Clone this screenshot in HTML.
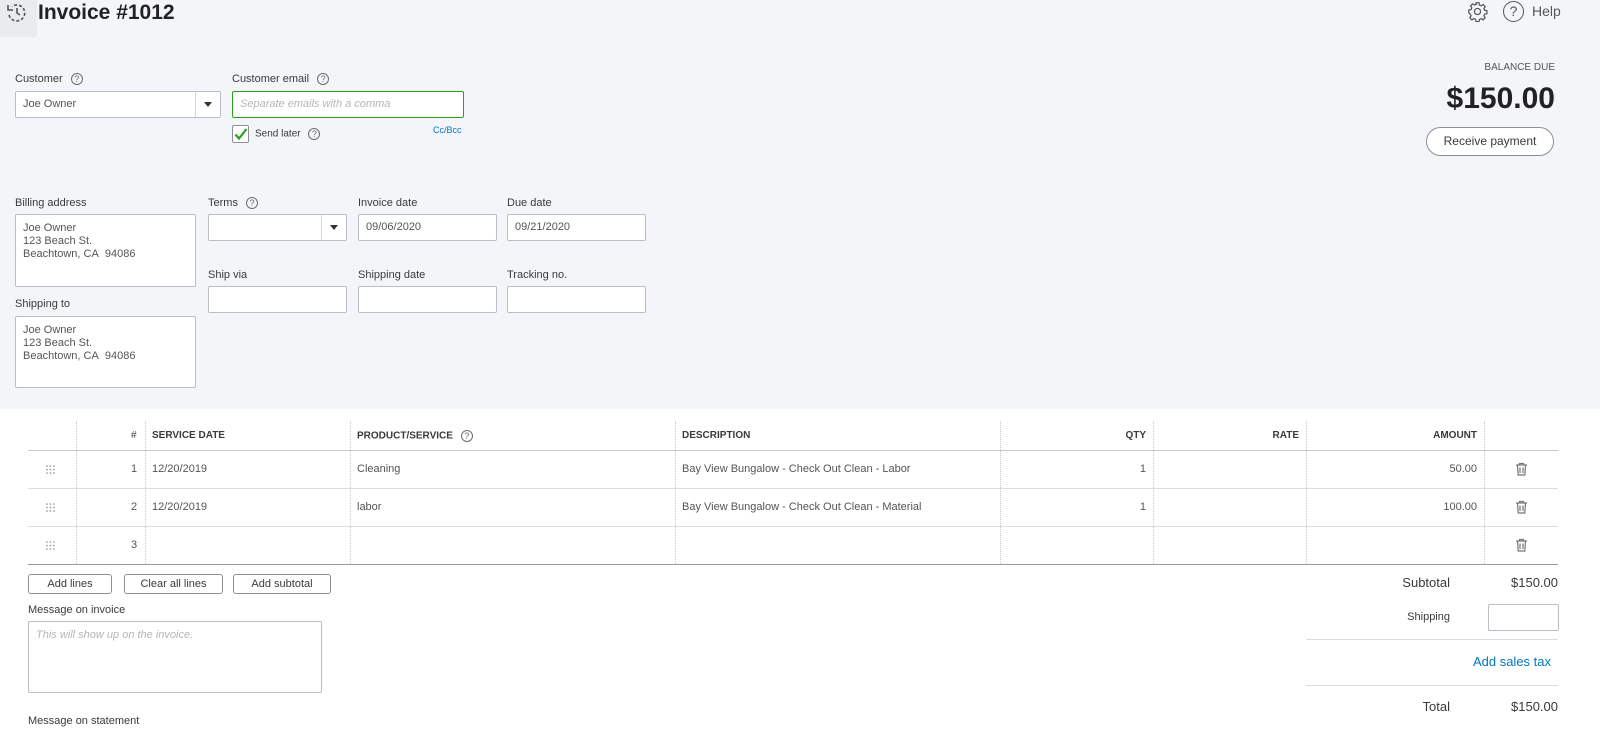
<!DOCTYPE html>
<html><head><meta charset="utf-8"><style>
*{box-sizing:border-box;margin:0;padding:0}
body{width:1600px;height:746px;overflow:hidden;background:#fff;font-family:"Liberation Sans",sans-serif;color:#393a3d;position:relative;font-size:11px}
.a{position:absolute}
.top{position:absolute;left:0;top:0;width:1600px;height:409px;background:#f4f5f8}
.lbl{position:absolute;font-size:11px;color:#393a3d}
.inp{position:absolute;background:#fff;border:1px solid #babec5;border-radius:2px;font-size:11px;color:#555;padding:0 7px;line-height:25px}
.q{display:inline-block;width:12px;height:12px;border:1px solid #6b6c72;border-radius:50%;font-size:9px;line-height:10px;text-align:center;color:#6b6c72;vertical-align:middle;margin-left:5px}
.btn{position:absolute;border:1px solid #8d9096;border-radius:3px;background:#fff;font-size:11px;text-align:center;line-height:18px;color:#393a3d}
.th{position:absolute;font-size:10px;font-weight:bold;top:430px;color:#393a3d}
.td{position:absolute;font-size:11px;color:#555}
.vl{position:absolute;width:0;border-left:1px dotted #c8c9cc;top:421px;height:143px}
.hl{position:absolute;left:28px;width:1530px;height:1px;background:#dcdde0}
.addr{padding:7px;line-height:13px}
</style></head><body>
<div class="top"></div>
<div class="a" style="left:0;top:0;width:37px;height:37px;background:#eaebee"></div>
<svg class="a" style="left:5px;top:2px" width="24" height="22" viewBox="0 0 24 22" fill="none" stroke="#555" stroke-width="1.6"><path d="M4 13a8 8 0 1 0 3-8.5" stroke-dasharray="3 2"/><path d="M3 3v5h5"/><path d="M12 6v5l3 2"/></svg>
<div class="a" style="left:38px;top:1px;font-size:21px;font-weight:bold;color:#222">Invoice #1012</div>
<svg class="a" style="left:1467px;top:1px" width="21" height="21" viewBox="0 0 24 24" fill="none" stroke="#555" stroke-width="1.4"><circle cx="12" cy="12" r="3.5"/><path d="M10.3 2h3.4l.5 2.6 2 .9 2.2-1.5 2.4 2.4-1.5 2.2.9 2 2.6.5v3.4l-2.6.5-.9 2 1.5 2.2-2.4 2.4-2.2-1.5-2 .9-.5 2.6h-3.4l-.5-2.6-2-.9-2.2 1.5-2.4-2.4 1.5-2.2-.9-2L2 13.7v-3.4l2.6-.5.9-2L4 5.6 6.4 3.2l2.2 1.5 2-.9z"/></svg>
<div class="a" style="left:1503px;top:1px;width:21px;height:21px;border:1.5px solid #555;border-radius:50%;text-align:center;font-size:14px;line-height:18px;color:#555">?</div>
<div class="a" style="left:1532px;top:3px;font-size:14px;color:#555">Help</div>
<div class="a" style="left:1480px;top:62px;width:75px;text-align:right;font-size:10px;color:#555">BALANCE DUE</div>
<div class="a" style="left:1380px;top:82px;width:175px;text-align:right;font-size:30px;font-weight:bold;color:#222">$150.00</div>
<div class="a" style="left:1426px;top:127px;width:128px;height:29px;border:1px solid #8d9096;border-radius:15px;background:#fff;text-align:center;line-height:27px;font-size:12px">Receive payment</div>

<div class="lbl" style="left:15px;top:73px">Customer <span class="q">?</span></div>
<div class="inp" style="left:15px;top:91px;width:206px;height:27px">Joe Owner</div>
<div class="a" style="left:195px;top:92px;width:1px;height:25px;background:#d4d7dc"></div>
<div class="a" style="left:204px;top:102px;border-left:4px solid transparent;border-right:4px solid transparent;border-top:5px solid #333"></div>
<div class="lbl" style="left:232px;top:73px">Customer email <span class="q">?</span></div>
<div class="inp" style="left:232px;top:91px;width:232px;height:27px;border-color:#2ca01c;color:#b5b6b9;font-style:italic">Separate emails with a comma</div>
<div class="a" style="left:232px;top:125px;width:17px;height:18px;border:1px solid #8d9096;border-radius:2px;background:#fff"></div>
<svg class="a" style="left:234px;top:127px" width="14" height="14" viewBox="0 0 14 14"><path d="M1.5 7.5l3.5 4L12.5 2" stroke="#2ca01c" stroke-width="2.2" fill="none"/></svg>
<div class="lbl" style="left:255px;top:128px;font-size:10px">Send later <span class="q">?</span></div>
<div class="a" style="left:433px;top:125px;font-size:9px;color:#0077c5">Cc/Bcc</div>

<div class="lbl" style="left:15px;top:197px">Billing address</div>
<div class="inp addr" style="left:15px;top:214px;width:181px;height:73px">Joe Owner<br>123 Beach St.<br>Beachtown, CA&nbsp; 94086</div>
<div class="lbl" style="left:15px;top:298px">Shipping to</div>
<div class="inp addr" style="left:15px;top:316px;width:181px;height:72px">Joe Owner<br>123 Beach St.<br>Beachtown, CA&nbsp; 94086</div>
<div class="lbl" style="left:208px;top:197px">Terms <span class="q">?</span></div>
<div class="inp" style="left:208px;top:214px;width:139px;height:27px"></div>
<div class="a" style="left:321px;top:215px;width:1px;height:25px;background:#d4d7dc"></div>
<div class="a" style="left:330px;top:225px;border-left:4px solid transparent;border-right:4px solid transparent;border-top:5px solid #333"></div>
<div class="lbl" style="left:358px;top:197px">Invoice date</div>
<div class="inp" style="left:358px;top:214px;width:139px;height:27px">09/06/2020</div>
<div class="lbl" style="left:507px;top:197px">Due date</div>
<div class="inp" style="left:507px;top:214px;width:139px;height:27px">09/21/2020</div>
<div class="lbl" style="left:208px;top:269px">Ship via</div>
<div class="inp" style="left:208px;top:286px;width:139px;height:27px"></div>
<div class="lbl" style="left:358px;top:269px">Shipping date</div>
<div class="inp" style="left:358px;top:286px;width:139px;height:27px"></div>
<div class="lbl" style="left:507px;top:269px">Tracking no.</div>
<div class="inp" style="left:507px;top:286px;width:139px;height:27px"></div>

<div class="vl" style="left:76px"></div><div class="vl" style="left:145px"></div><div class="vl" style="left:350px"></div><div class="vl" style="left:675px"></div><div class="vl" style="left:1000px"></div><div class="vl" style="left:1153px"></div><div class="vl" style="left:1306px"></div><div class="vl" style="left:1484px"></div>
<div class="hl" style="top:450px;background:#c8c9cc"></div>
<div class="hl" style="top:488px"></div>
<div class="hl" style="top:526px"></div>
<div class="hl" style="top:564px;background:#9a9b9f"></div>
<div class="th" style="left:131px;font-weight:normal">#</div>
<div class="th" style="left:152px">SERVICE DATE</div>
<div class="th" style="left:357px">PRODUCT/SERVICE <span class="q" style="font-weight:normal">?</span></div>
<div class="th" style="left:682px">DESCRIPTION</div>
<div class="th" style="left:1100px;width:46px;text-align:right">QTY</div>
<div class="th" style="left:1250px;width:49px;text-align:right">RATE</div>
<div class="th" style="left:1400px;width:77px;text-align:right">AMOUNT</div>

<svg class="a" style="left:46px;top:465px" width="9" height="9" viewBox="0 0 9 9" fill="#888"><circle cx="1" cy="1" r=".8"/><circle cx="4.5" cy="1" r=".8"/><circle cx="8" cy="1" r=".8"/><circle cx="1" cy="4.5" r=".8"/><circle cx="4.5" cy="4.5" r=".8"/><circle cx="8" cy="4.5" r=".8"/><circle cx="1" cy="8" r=".8"/><circle cx="4.5" cy="8" r=".8"/><circle cx="8" cy="8" r=".8"/></svg>
<svg class="a" style="left:46px;top:503px" width="9" height="9" viewBox="0 0 9 9" fill="#888"><circle cx="1" cy="1" r=".8"/><circle cx="4.5" cy="1" r=".8"/><circle cx="8" cy="1" r=".8"/><circle cx="1" cy="4.5" r=".8"/><circle cx="4.5" cy="4.5" r=".8"/><circle cx="8" cy="4.5" r=".8"/><circle cx="1" cy="8" r=".8"/><circle cx="4.5" cy="8" r=".8"/><circle cx="8" cy="8" r=".8"/></svg>
<svg class="a" style="left:46px;top:541px" width="9" height="9" viewBox="0 0 9 9" fill="#888"><circle cx="1" cy="1" r=".8"/><circle cx="4.5" cy="1" r=".8"/><circle cx="8" cy="1" r=".8"/><circle cx="1" cy="4.5" r=".8"/><circle cx="4.5" cy="4.5" r=".8"/><circle cx="8" cy="4.5" r=".8"/><circle cx="1" cy="8" r=".8"/><circle cx="4.5" cy="8" r=".8"/><circle cx="8" cy="8" r=".8"/></svg>

<div class="td" style="left:131px;top:463px">1</div>
<div class="td" style="left:152px;top:463px">12/20/2019</div>
<div class="td" style="left:357px;top:463px">Cleaning</div>
<div class="td" style="left:682px;top:463px">Bay View Bungalow - Check Out Clean - Labor</div>
<div class="td" style="left:1100px;top:463px;width:46px;text-align:right">1</div>
<div class="td" style="left:1400px;top:463px;width:77px;text-align:right">50.00</div>

<div class="td" style="left:131px;top:501px">2</div>
<div class="td" style="left:152px;top:501px">12/20/2019</div>
<div class="td" style="left:357px;top:501px">labor</div>
<div class="td" style="left:682px;top:501px">Bay View Bungalow - Check Out Clean - Material</div>
<div class="td" style="left:1100px;top:501px;width:46px;text-align:right">1</div>
<div class="td" style="left:1400px;top:501px;width:77px;text-align:right">100.00</div>

<div class="td" style="left:131px;top:539px">3</div>

<svg class="a" style="left:1515px;top:462px" width="13" height="14" viewBox="0 0 13 14" fill="none" stroke="#777" stroke-width="1.2"><path d="M1 3h11M4.5 3V1.5h4V3M2.5 3l.7 10h6.6l.7-10M5 5.5v5.5M8 5.5v5.5"/></svg>
<svg class="a" style="left:1515px;top:500px" width="13" height="14" viewBox="0 0 13 14" fill="none" stroke="#777" stroke-width="1.2"><path d="M1 3h11M4.5 3V1.5h4V3M2.5 3l.7 10h6.6l.7-10M5 5.5v5.5M8 5.5v5.5"/></svg>
<svg class="a" style="left:1515px;top:538px" width="13" height="14" viewBox="0 0 13 14" fill="none" stroke="#777" stroke-width="1.2"><path d="M1 3h11M4.5 3V1.5h4V3M2.5 3l.7 10h6.6l.7-10M5 5.5v5.5M8 5.5v5.5"/></svg>

<div class="btn" style="left:28px;top:574px;width:84px;height:20px">Add lines</div>
<div class="btn" style="left:124px;top:574px;width:99px;height:20px">Clear all lines</div>
<div class="btn" style="left:233px;top:574px;width:98px;height:20px">Add subtotal</div>

<div class="lbl" style="left:28px;top:604px">Message on invoice</div>
<div class="inp" style="left:28px;top:621px;width:294px;height:72px;color:#b5b6b9;font-style:italic;line-height:26px">This will show up on the invoice.</div>
<div class="lbl" style="left:28px;top:715px">Message on statement</div>

<div class="a" style="left:1340px;top:575px;width:110px;text-align:right;font-size:13px">Subtotal</div>
<div class="a" style="left:1470px;top:575px;width:88px;text-align:right;font-size:13px">$150.00</div>
<div class="a" style="left:1380px;top:611px;width:70px;text-align:right;font-size:11px">Shipping</div>
<div class="inp" style="left:1488px;top:604px;width:71px;height:27px"></div>
<div class="a" style="left:1306px;top:639px;width:252px;height:1px;background:#dcdde0"></div>
<div class="a" style="left:1440px;top:654px;width:111px;text-align:right;font-size:13px;color:#0077c5">Add sales tax</div>
<div class="a" style="left:1306px;top:685px;width:252px;height:1px;background:#dcdde0"></div>
<div class="a" style="left:1380px;top:699px;width:70px;text-align:right;font-size:13px">Total</div>
<div class="a" style="left:1470px;top:699px;width:88px;text-align:right;font-size:13px">$150.00</div>
</body></html>
